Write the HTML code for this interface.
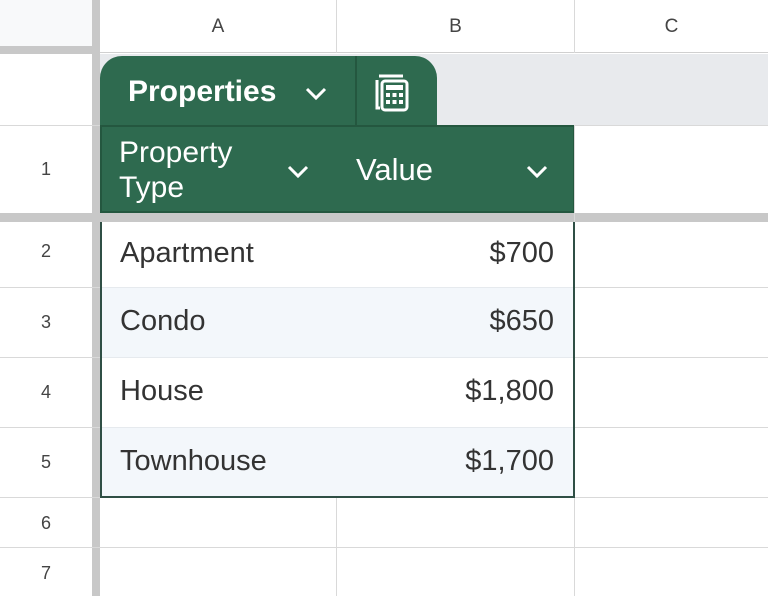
<!DOCTYPE html>
<html><head><style>
body{margin:0;width:768px;height:596px;overflow:hidden;background:#fff;font-family:"Liberation Sans",Arial,sans-serif;position:relative}
.a{position:absolute}
.vl{position:absolute;width:1px;background:#d9d9d9}
.hl{position:absolute;height:1px;background:#d9d9d9;left:0;width:768px}
.rn{position:absolute;left:0;width:92px;text-align:center;font-size:18px;color:#444}
.cl{position:absolute;top:0;height:52px;line-height:54px;text-align:center;font-size:19px;color:#444}
.cell{position:absolute;left:102px;width:470px;font-size:29px;color:#333}
.cell span{position:absolute;top:50%;transform:translateY(-54%)}
.chev{position:absolute}
</style></head><body>
<div class="a" style="left:0;top:0;width:92px;height:46px;background:#f8f9fa"></div>
<div class="a" style="left:92px;top:0;width:8px;height:596px;background:#c8c8c8"></div>
<div class="a" style="left:0;top:46px;width:100px;height:8px;background:#c8c8c8"></div>
<div class="hl" style="top:52px;left:100px;width:668px;background:#d0d0d0"></div>
<div class="cl" style="left:100px;width:236px">A</div>
<div class="cl" style="left:337px;width:237px">B</div>
<div class="cl" style="left:575px;width:193px">C</div>
<div class="vl" style="left:336px;top:0;height:53px"></div>
<div class="vl" style="left:574px;top:0;height:53px"></div>
<div class="a" style="left:100px;top:54px;width:668px;height:71px;background:#e8eaed"></div>
<div class="hl" style="top:125px"></div>
<div class="a" style="left:100px;top:56px;width:337px;height:70px;background:#2e6a4f;border-radius:22px 22px 0 0"></div>
<div class="a" style="left:355px;top:56px;width:2px;height:69px;background:#24573f"></div>
<div class="a" style="left:128px;top:75px;font-size:30px;color:#fff;font-weight:bold">Properties</div>
<svg class="chev" style="left:304px;top:86px" width="24" height="16"><path d="M3 3 L12 12 L21 3" stroke="#fff" stroke-width="3" fill="none"/></svg>
<svg class="a" style="left:373px;top:72px" width="40" height="42" viewBox="0 0 40 42"><path d="M4 8 V36 H7" stroke="#fff" stroke-width="3" fill="none"/><path d="M6 4 H30" stroke="#fff" stroke-width="3"/><rect x="9" y="9" width="25" height="29" rx="3" stroke="#fff" stroke-width="3" fill="none"/><rect x="13" y="13" width="17" height="5" fill="#fff"/><g fill="#fff"><rect x="13" y="21" width="4" height="4"/><rect x="19.5" y="21" width="4" height="4"/><rect x="26" y="21" width="4" height="4"/><rect x="13" y="28" width="4" height="4"/><rect x="19.5" y="28" width="4" height="4"/><rect x="26" y="28" width="4" height="4"/></g></svg>
<div class="a" style="left:100px;top:125px;width:475px;height:88px;background:#2e6a4f;box-sizing:border-box;border:2px solid #24573f"></div>
<div class="a" style="left:119px;top:135px;font-size:30px;line-height:35px;color:#fff">Property<br>Type</div>
<svg class="chev" style="left:286px;top:164px" width="24" height="16"><path d="M3 3 L12 12 L21 3" stroke="#fff" stroke-width="3" fill="none"/></svg>
<div class="a" style="left:356px;top:152px;font-size:31px;color:#fff">Value</div>
<svg class="chev" style="left:525px;top:164px" width="24" height="16"><path d="M3 3 L12 12 L21 3" stroke="#fff" stroke-width="3" fill="none"/></svg>
<div class="rn" style="top:159px">1</div>
<div class="a" style="left:0;top:213px;width:768px;height:9px;background:#c8c8c8"></div>
<div class="hl" style="top:287px"></div>
<div class="hl" style="top:357px"></div>
<div class="hl" style="top:427px"></div>
<div class="hl" style="top:497px"></div>
<div class="hl" style="top:547px"></div>
<div class="vl" style="left:574px;top:125px;height:471px"></div>
<div class="vl" style="left:336px;top:497px;height:99px"></div>
<div class="a" style="left:100px;top:222px;width:475px;height:276px;box-sizing:border-box;border:2px solid #2f4f45;border-top:none;background:#fff"></div>
<div class="a" style="left:102px;top:288px;width:471px;height:69px;background:#f3f7fb"></div>
<div class="a" style="left:102px;top:428px;width:471px;height:68px;background:#f3f7fb"></div>
<div class="hl" style="top:287px;left:102px;width:471px;background:#e6eaee"></div>
<div class="hl" style="top:357px;left:102px;width:471px;background:#e6eaee"></div>
<div class="hl" style="top:427px;left:102px;width:471px;background:#e6eaee"></div>
<div class="cell" style="top:222px;height:65px"><span style="left:18px">Apartment</span><span style="right:18px">$700</span></div>
<div class="cell" style="top:288px;height:69px"><span style="left:18px">Condo</span><span style="right:18px">$650</span></div>
<div class="cell" style="top:358px;height:69px"><span style="left:18px">House</span><span style="right:18px">$1,800</span></div>
<div class="cell" style="top:428px;height:69px"><span style="left:18px">Townhouse</span><span style="right:18px">$1,700</span></div>
<div class="rn" style="top:241px">2</div>
<div class="rn" style="top:312px">3</div>
<div class="rn" style="top:382px">4</div>
<div class="rn" style="top:452px">5</div>
<div class="rn" style="top:513px">6</div>
<div class="rn" style="top:563px">7</div>
</body></html>
